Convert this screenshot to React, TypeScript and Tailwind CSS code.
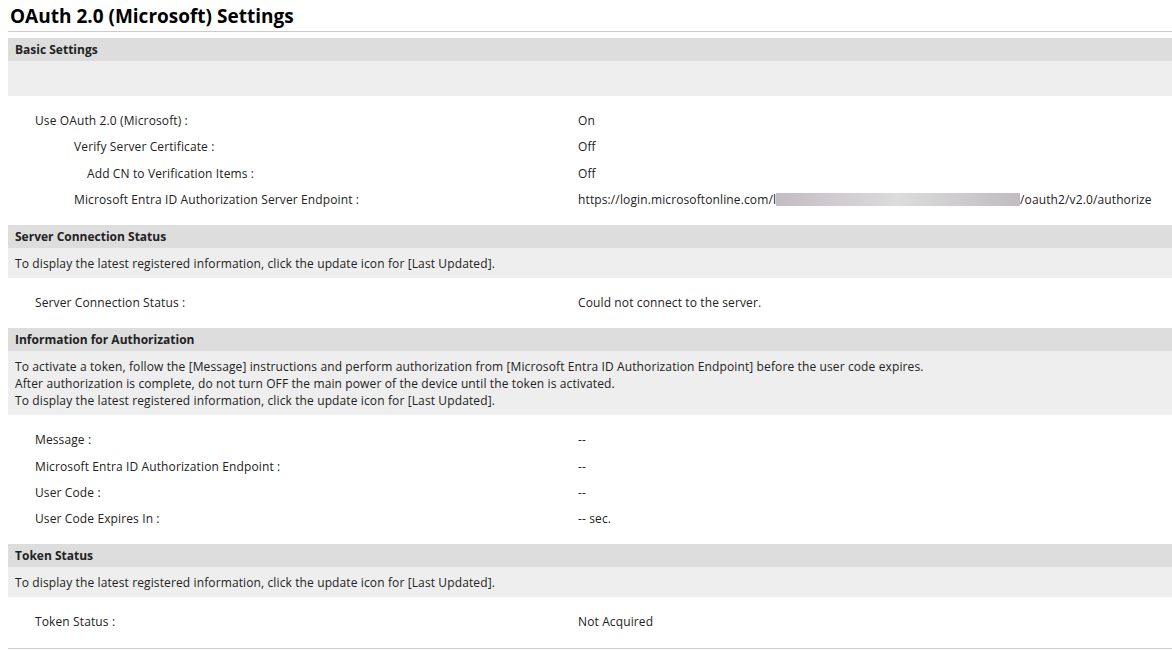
import React from "react";

type Row = { label: string; value: React.ReactNode; indent?: number };

const indentClass: Record<number, string> = {
  0: "pl-[27px]",
  1: "pl-[66px]",
  2: "pl-[79px]",
};

function Section({
  title,
  notes,
  emptyNote,
  rows,
}: {
  title: string;
  notes?: string[];
  emptyNote?: boolean;
  rows: Row[];
}) {
  return (
    <div>
      <div className="bg-[#dddddd] h-[23px] flex items-center px-[7px] font-bold text-[12px] text-[#222]">
        {title}
      </div>
      {emptyNote ? (
        <div className="bg-[#eeeeee] h-[35px]" />
      ) : (
        <div className="bg-[#eeeeee] px-[7px] py-[6.5px] text-[12px] leading-[17px] tracking-[0.12px] text-[#222]">
          {notes?.map((n) => (
            <div key={n}>{n}</div>
          ))}
        </div>
      )}
      <div className="pt-[12px] pb-[12px]">
        {rows.map((r) => (
          <div key={r.label} className="flex h-[26.25px] items-center text-[12px] tracking-[0.12px] text-[#222]">
            <div className={`w-[570px] shrink-0 ${indentClass[r.indent ?? 0]}`}>{r.label}</div>
            <div className="flex items-center">{r.value}</div>
          </div>
        ))}
      </div>
    </div>
  );
}

const updateNote = "To display the latest registered information, click the update icon for [Last Updated].";

export default function App() {
  return (
    <div
      className="w-[1172px] h-[651px] bg-white overflow-hidden pl-[8px]"
      style={{ fontFamily: '"Open Sans", "Noto Sans", sans-serif' }}
    >
      <h1 className="pl-[2px] pt-[4px] h-[32px] text-[19px] leading-[25px] font-bold text-black border-b border-[#cccccc]">
        OAuth 2.0 (Microsoft) Settings
      </h1>
      <div className="pt-[6px]">
        <Section
          title="Basic Settings"
          emptyNote
          rows={[
            { label: "Use OAuth 2.0 (Microsoft) :", value: "On" },
            { label: "Verify Server Certificate :", value: "Off", indent: 1 },
            { label: "Add CN to Verification Items :", value: "Off", indent: 2 },
            {
              label: "Microsoft Entra ID Authorization Server Endpoint :",
              value: (
                <>
                  <span>https://login.microsoftonline.com/l</span>
                  <span className="inline-block w-[244px] h-[13px] bg-gradient-to-r from-[#c4bcc4] via-[#dcdcdc] to-[#c0bcc0]" />
                  <span>/oauth2/v2.0/authorize</span>
                </>
              ),
              indent: 1,
            },
          ]}
        />
        <Section
          title="Server Connection Status"
          notes={[updateNote]}
          rows={[{ label: "Server Connection Status :", value: "Could not connect to the server." }]}
        />
        <Section
          title="Information for Authorization"
          notes={[
            "To activate a token, follow the [Message] instructions and perform authorization from [Microsoft Entra ID Authorization Endpoint] before the user code expires.",
            "After authorization is complete, do not turn OFF the main power of the device until the token is activated.",
            updateNote,
          ]}
          rows={[
            { label: "Message :", value: "--" },
            { label: "Microsoft Entra ID Authorization Endpoint :", value: "--" },
            { label: "User Code :", value: "--" },
            { label: "User Code Expires In :", value: "-- sec." },
          ]}
        />
        <Section
          title="Token Status"
          notes={[updateNote]}
          rows={[{ label: "Token Status :", value: "Not Acquired" }]}
        />
        <div className="border-t border-[#cccccc]" />
      </div>
    </div>
  );
}
